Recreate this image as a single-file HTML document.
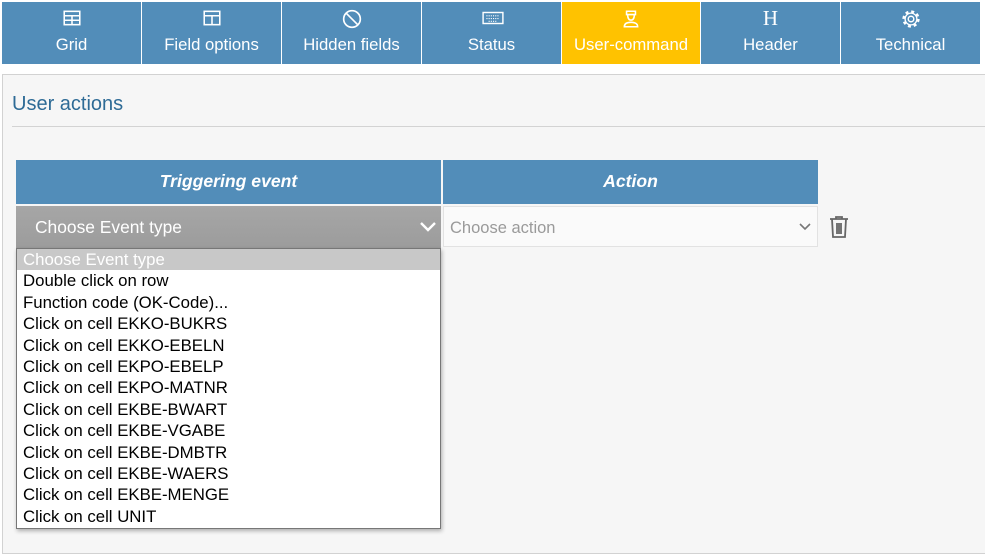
<!DOCTYPE html>
<html><head><style>
*{box-sizing:border-box;margin:0;padding:0}
body{width:985px;height:538px;background:#fff;font-family:"Liberation Sans",sans-serif;position:relative;overflow:hidden}
.tab{position:absolute;top:2px;height:62px;background:#528db9;color:#fff;font-size:16.7px;text-align:center}
.tab.act{background:#ffc200}
.tab .lbl{position:absolute;top:33px;left:0;right:0}
.tab svg{position:absolute;top:7px;left:50%;margin-left:-10px}
.panel{position:absolute;left:2px;top:74px;width:990px;height:480px;background:#f6f6f6;border:1px solid #d2d2d2}
h3{position:absolute;left:12px;top:93px;font-weight:normal;font-size:20px;color:#2e6b96}
.hr{position:absolute;left:12px;top:126px;width:980px;height:1px;background:#d3d3d3}
.th{position:absolute;top:160px;height:44px;background:#528db9;color:#fff;font-weight:bold;font-style:italic;font-size:17.6px;text-align:center;line-height:43px}
.sel1{position:absolute;left:16px;top:206px;width:425px;height:42px;background:linear-gradient(#a6a6a6,#9c9c9c);color:#fff;font-size:17.4px;line-height:42px;padding-left:19px}
.sel2{position:absolute;left:443px;top:206px;width:375px;height:41px;background:#fafafa;border:1px solid #e2e2e2;color:#9a9a9a;font-size:16.5px;line-height:42px;padding-left:6px}
.list{position:absolute;left:16px;top:248px;width:425px;height:281px;background:#fff;border:1px solid #777;box-shadow:1px 2px 4px rgba(0,0,0,.3);font-size:16.8px;color:#000}
.list div{height:21.4px;line-height:21px;padding-left:6px}
.list div.h{background:#c8c8c8;color:#fff}
</style></head><body>
<div class="tab" style="left:2px;width:139px"><svg width="20" height="18" viewBox="0 0 18 16"><rect x="2" y="2" width="14" height="12" fill="none" stroke="#fff" stroke-width="1.4"/><path d="M2 6H16M2 10H16M9 6V14" stroke="#fff" stroke-width="1.4"/></svg><div class="lbl">Grid</div></div>
<div class="tab" style="left:142px;width:139px"><svg width="20" height="18" viewBox="0 0 18 16"><rect x="2" y="2" width="14" height="12" fill="none" stroke="#fff" stroke-width="1.4"/><path d="M2 6H16M9 6V14" stroke="#fff" stroke-width="1.4"/></svg><div class="lbl">Field options</div></div>
<div class="tab" style="left:282px;width:139px"><svg width="20" height="20" viewBox="0 0 18 18"><circle cx="9" cy="9" r="7.5" fill="none" stroke="#fff" stroke-width="1.5"/><path d="M4 4L14 14" stroke="#fff" stroke-width="1.5"/></svg><div class="lbl">Hidden fields</div></div>
<div class="tab" style="left:422px;width:139px"><svg width="22" height="18" viewBox="0 0 20 16"><rect x="1" y="3" width="18" height="10" fill="none" stroke="#fff" stroke-width="1.3"/><path d="M4 6H16M4 8.5H16M6 11H14" stroke="#fff" stroke-width="1" stroke-dasharray="1 1"/></svg><div class="lbl">Status</div></div>
<div class="tab act" style="left:562px;width:138px"><svg width="20" height="20" viewBox="0 0 18 18"><path d="M5 2H13V5H5Z M6 5Q6 10 9 10Q12 10 12 5 M3 16Q3 12 9 12Q15 12 15 16Z" fill="none" stroke="#fff" stroke-width="1.4"/></svg><div class="lbl">User-command</div></div>
<div class="tab" style="left:701px;width:139px"><div style="position:absolute;top:4px;left:0;right:0;font-family:'Liberation Serif',serif;font-size:21px">H</div><div class="lbl">Header</div></div>
<div class="tab" style="left:841px;width:139px"><svg width="20" height="20" viewBox="0 0 18 18"><circle cx="9" cy="9" r="2.5" fill="none" stroke="#fff" stroke-width="1.3"/><circle cx="9" cy="9" r="6.5" fill="none" stroke="#fff" stroke-width="2.6" stroke-dasharray="2.6 2.5"/><circle cx="9" cy="9" r="5.3" fill="none" stroke="#fff" stroke-width="1.2"/></svg><div class="lbl">Technical</div></div>
<div class="panel"></div>
<h3>User actions</h3>
<div class="hr"></div>
<div class="th" style="left:16px;width:425px">Triggering event</div>
<div class="th" style="left:443px;width:375px">Action</div>
<div class="sel1">Choose Event type<svg style="position:absolute;right:4px;top:15px" width="18" height="12" viewBox="0 0 18 12"><path d="M2 2L9 9L16 2" fill="none" stroke="#fff" stroke-width="2.4"/></svg></div>
<div class="sel2">Choose action<svg style="position:absolute;right:6px;top:16px" width="12" height="8" viewBox="0 0 12 8"><path d="M1 1L6 6L11 1" fill="none" stroke="#777" stroke-width="1.6"/></svg></div>
<svg style="position:absolute;left:829px;top:215px" width="20" height="24" viewBox="0 0 20 24"><path d="M1 4H19M7 4V2H13V4M3 4L4 22H16L17 4M8 8V19M10 8V19M12 8V19" fill="none" stroke="#666" stroke-width="1.8"/></svg>
<div class="list">
<div class="h">Choose Event type</div>
<div>Double click on row</div>
<div>Function code (OK-Code)...</div>
<div>Click on cell EKKO-BUKRS</div>
<div>Click on cell EKKO-EBELN</div>
<div>Click on cell EKPO-EBELP</div>
<div>Click on cell EKPO-MATNR</div>
<div>Click on cell EKBE-BWART</div>
<div>Click on cell EKBE-VGABE</div>
<div>Click on cell EKBE-DMBTR</div>
<div>Click on cell EKBE-WAERS</div>
<div>Click on cell EKBE-MENGE</div>
<div>Click on cell UNIT</div>
</div>
</body></html>
